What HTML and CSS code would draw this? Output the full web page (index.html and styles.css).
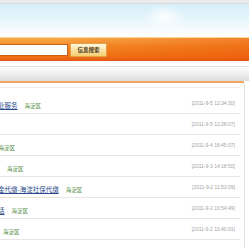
FILE: index.html
```html
<!DOCTYPE html>
<html lang="zh-CN">
<head>
    <meta charset="UTF-8">
    <meta name="viewport" content="width=device-width, initial-scale=1.0">
    <title>海淀信息</title>
    <link rel="stylesheet" href="styles.css">
</head>
<body>
<div class="page">
    <div class="topbar"></div>

    <div class="banner">
        <span class="cloud"></span>
    </div>

    <div class="searchbar">
        <input type="text" class="search-input" name="q">
        <button type="button" class="search-btn">信息搜索</button>
    </div>

    <div class="panel-head"></div>

    <div class="panel-body">
        <ul class="info-list">
            <li>
                <span class="info-left"><a href="#">海淀区公司注册代理记账专业服务</a><span class="area">海淀区</span></span>
                <span class="date">[2011-9-5 12:34:30]</span>
            </li>
            <li>
                <span class="info-left"><a href="#">海淀家政服务</a><span class="area">海淀区</span></span>
                <span class="date">[2011-9-5 12:28:07]</span>
            </li>
            <li>
                <span class="info-left"><a href="#">海淀区专业搬家搬场公司</a><span class="area">海淀区</span></span>
                <span class="date">[2011-9-4 16:45:07]</span>
            </li>
            <li>
                <span class="info-left"><a href="#">海淀电脑维修上门服务中心</a><span class="area wide">海淀区</span></span>
                <span class="date">[2011-9-3 14:18:50]</span>
            </li>
            <li>
                <span class="info-left"><a href="#">北京海淀社保代缴个人公积金代缴-海淀社保代缴</a><span class="area">海淀区</span></span>
                <span class="date">[2011-9-2 11:52:09]</span>
            </li>
            <li>
                <span class="info-left"><a href="#">海淀区开锁换锁公司服务电话</a><span class="area">海淀区</span></span>
                <span class="date">[2011-9-2 10:54:49]</span>
            </li>
            <li>
                <span class="info-left"><a href="#">海淀管道疏通马桶疏通服务</a><span class="area narrow">海淀区</span></span>
                <span class="date">[2011-9-2 10:40:01]</span>
            </li>
        </ul>
    </div>
</div>
</body>
</html>
```

FILE: styles.css
```css
body {
    margin: 0;
    padding: 0;
    background-color: #fff;
    font-family: "Liberation Sans", "Noto Sans CJK SC", sans-serif;
    overflow: hidden;
}

/* the page is wider than the window, its left part is cut off */
.page {
    margin-left: -80px;
}

.topbar {
    height: 3px;
    background-color: #ebebeb;
    border-bottom: 1px solid #dadada;
}

.banner {
    height: 33px;
    background: linear-gradient(to bottom, #d6eef9 0%, #e6f5fc 45%, #f7fcfe 80%, #fff 100%);
    position: relative;
    overflow: hidden;
}

.banner .cloud {
    position: absolute;
    left: 225px;
    top: 0;
    width: 40px;
    height: 26px;
    border-radius: 50%;
    background: radial-gradient(ellipse at center, rgba(255, 255, 255, 0.9) 0%, rgba(255, 255, 255, 0) 70%);
}

.searchbar {
    height: 23px;
    border-top: 1px solid #fbd593;
    background: linear-gradient(to right, rgba(240, 90, 10, 0) 40%, rgba(236, 80, 8, 0.45) 100%),
                linear-gradient(to bottom, #f8ac4e 0%, #f38b24 35%, #ef6f14 85%, #e2581a 100%);
    display: flex;
    align-items: center;
}

.search-input {
    width: 148px;
    height: 12px;
    box-sizing: border-box;
    margin: 1px 0 0 0;
    padding: 0;
    border: 1px solid #c9621c;
    background-color: #fff;
}

.search-btn {
    width: 37px;
    height: 14px;
    margin: 0 0 0 2px;
    padding: 0;
    border: 1px solid #e3a248;
    border-radius: 1px;
    background: linear-gradient(to bottom, #fff8e0 0%, #fbe2a4 50%, #f6cd72 100%);
    color: #4a3418;
    font-family: "Noto Sans CJK SC", sans-serif;
    font-size: 5.5px;
    font-weight: bold;
    line-height: 12px;
}

.panel-head {
    margin-top: 5px;
    height: 14px;
    border-top: 1px solid #e2e2e2;
    background: linear-gradient(to bottom, #fcfcfc 0%, #eeeeee 50%, #dcdcdc 100%);
}

.panel-body {
    margin-right: 4px;
    border-top: 2px solid #f2a35e;
    border-right: 1px solid #e2e2e2;
    border-top-right-radius: 3px;
    padding-top: 4px;
    height: 161px;
}

.info-list {
    list-style-type: none;
    margin: 0 4px 0 0;
    padding: 5px 0 0 0;
    border-top: 1px solid #ececec;
}

.info-list li {
    height: 20px;
    border-bottom: 1px solid #e6e6e6;
    display: flex;
    align-items: center;
    padding-right: 5px;
}

.info-left {
    flex: 1;
    white-space: nowrap;
}

.info-left a {
    font-size: 6.5px;
    color: #2c4a8c;
    text-decoration: underline;
}

.area {
    margin-left: 7px;
    font-size: 5.5px;
    color: #4f8c3e;
}

.area.wide {
    margin-left: 9px;
}

.area.narrow {
    margin-left: 5px;
}

.date {
    font-size: 5px;
    color: #a3a3a3;
    white-space: nowrap;
}
```
